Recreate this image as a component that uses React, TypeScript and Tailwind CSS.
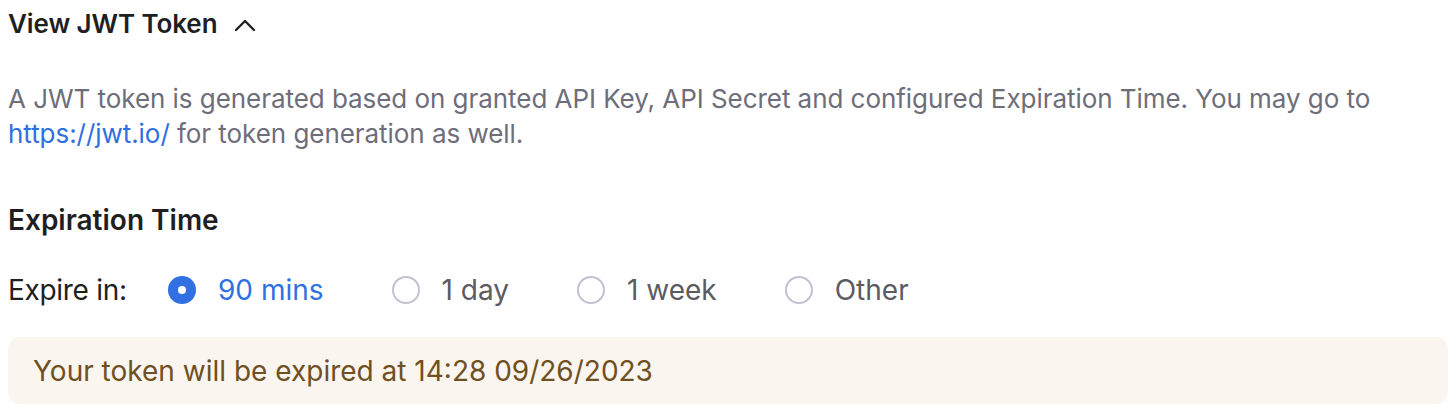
const options = ["90 mins", "1 day", "1 week", "Other"];

export default function App() {
  const selected = "90 mins";
  return (
    <div className="w-[1456px] h-[416px] bg-white px-[8px] font-['Inter',sans-serif] overflow-hidden">
      <div className="flex items-center gap-[17px] mt-[4px] h-[40px]">
        <h3 className="text-[26px] leading-[40px] font-semibold text-[#1f1f22] tracking-[-0.1px]">View JWT Token</h3>
        <svg width="22" height="14" viewBox="0 0 22 14" fill="none" className="mt-[1px]">
          <path d="M2 12L11 3L20 12" stroke="#1f1f22" strokeWidth="2.4" strokeLinecap="round" strokeLinejoin="round" />
        </svg>
      </div>

      <p className="mt-[37px] text-[26px] leading-[35px] text-[#6e6d7a] pr-[60px] tracking-[-0.05px]">
        A JWT token is generated based on granted API Key, API Secret and configured Expiration Time. You may go to{" "}
        <a href="#" className="text-[#2f6fe0]">https://jwt.io/</a> for token generation as well.
      </p>

      <h4 className="mt-[52px] text-[28px] leading-[34px] font-semibold text-[#1f1f22]">Expiration Time</h4>

      <div className="mt-[36px] h-[34px] flex items-center text-[28px] leading-[34px]">
        <span className="text-[#1f1f22] w-[160px] tracking-[-0.3px]">Expire in:</span>
        <div className="flex items-center gap-[68px]">
          {options.map((o) => {
            const on = o === selected;
            return (
              <label key={o} className="flex items-center gap-[22px]">
                {on ? (
                  <span className="w-[28px] h-[28px] rounded-full bg-[#3170e2] flex items-center justify-center">
                    <span className="w-[8px] h-[8px] rounded-full bg-white" />
                  </span>
                ) : (
                  <span className="w-[28px] h-[28px] rounded-full border-2 border-[#c4c0d3]" />
                )}
                <span className={on ? "text-[#3170e2]" : "text-[#5c5b61]"}>{o}</span>
              </label>
            );
          })}
        </div>
      </div>

      <div className="mt-[30px] h-[67px] rounded-[12px] bg-[#faf5ee] flex items-center px-[25px]">
        <span className="text-[28px] text-[#6f5022]">Your token will be expired at 14:28 09/26/2023</span>
      </div>
    </div>
  );
}
